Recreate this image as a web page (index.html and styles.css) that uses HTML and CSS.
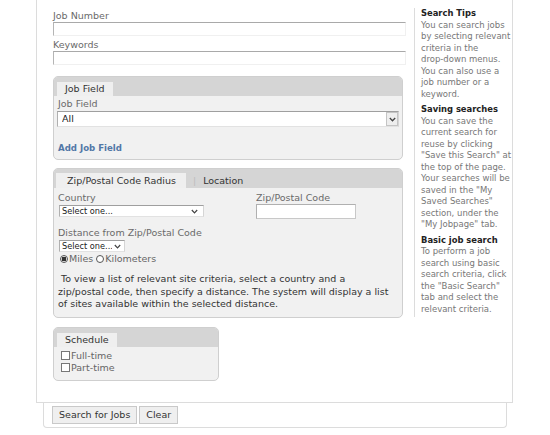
FILE: index.html
```html
<!DOCTYPE html>
<html>
<head>
<meta charset="utf-8">
<link rel="stylesheet" href="styles.css">
</head>
<body>
<div class="page">
  <div class="card">
    <form class="main">
      <label class="lbl">Job Number</label>
      <input type="text" class="field">
      <label class="lbl">Keywords</label>
      <input type="text" class="field">

      <section class="panel panel-jobfield">
        <div class="panel-head"><span class="tab">Job Field</span></div>
        <div class="panel-body">
          <label class="lbl">Job Field</label>
          <div class="select select-big">
            <span class="select-val">All</span>
            <span class="select-btn"><svg width="7" height="5" viewBox="0 0 7 5"><polyline points="0.8,1 3.5,3.8 6.2,1" fill="none" stroke="#444" stroke-width="1.3"/></svg></span>
          </div>
          <a class="add-link">Add Job Field</a>
        </div>
      </section>

      <section class="panel panel-loc">
        <div class="panel-head">
          <span class="tab">Zip/Postal Code Radius</span>
          <span class="sep">|</span>
          <span class="tab-plain">Location</span>
        </div>
        <div class="panel-body">
          <div class="loc-grid">
            <div>
              <label class="lbl">Country</label>
              <div class="select select-sm select-country">
                <span class="select-val">Select one...</span>
                <svg width="7" height="5" viewBox="0 0 7 5"><polyline points="0.8,1 3.5,3.8 6.2,1" fill="none" stroke="#444" stroke-width="1.2"/></svg>
              </div>
            </div>
            <div>
              <label class="lbl">Zip/Postal Code</label>
              <input type="text" class="field field-zip">
            </div>
          </div>
          <label class="lbl lbl-dist">Distance from Zip/Postal Code</label>
          <div class="select select-sm select-dist">
            <span class="select-val">Select one...</span>
            <svg width="7" height="5" viewBox="0 0 7 5"><polyline points="0.8,1 3.5,3.8 6.2,1" fill="none" stroke="#444" stroke-width="1.2"/></svg>
          </div>
          <div class="radios">
            <label class="opt"><input type="radio" name="unit" class="rb" checked>Miles</label>
            <label class="opt"><input type="radio" name="unit" class="rb">Kilometers</label>
          </div>
          <p class="note">To view a list of relevant site criteria, select a country and a<br>zip/postal code, then specify a distance. The system will display a list<br>of sites available within the selected distance.</p>
        </div>
      </section>

      <section class="panel panel-sched">
        <div class="panel-head"><span class="tab">Schedule</span></div>
        <div class="panel-body">
          <label class="opt opt-line"><input type="checkbox" class="cb">Full-time</label>
          <label class="opt opt-line"><input type="checkbox" class="cb">Part-time</label>
        </div>
      </section>
    </form>

    <aside class="tips">
      <div class="tip">
        <h3 class="tip-title">Search Tips</h3>
        <p>You can search jobs<br>by selecting relevant<br>criteria in the<br>drop-down menus.<br>You can also use a<br>job number or a<br>keyword.</p>
      </div>
      <div class="tip">
        <h3 class="tip-title">Saving searches</h3>
        <p>You can save the<br>current search for<br>reuse by clicking<br>"Save this Search" at<br>the top of the page.<br>Your searches will be<br>saved in the "My<br>Saved Searches"<br>section, under the<br>"My Jobpage" tab.</p>
      </div>
      <div class="tip">
        <h3 class="tip-title">Basic job search</h3>
        <p>To perform a job<br>search using basic<br>search criteria, click<br>the "Basic Search"<br>tab and select the<br>relevant criteria.</p>
      </div>
    </aside>
  </div>
  <div class="actions">
    <button type="button" class="btn">Search for Jobs</button>
    <button type="button" class="btn">Clear</button>
  </div>
</div>
</body>
</html>
```

FILE: styles.css
```css
* { box-sizing: border-box; }

body {
  margin: 0;
  background: #fff;
  font-family: "DejaVu Sans", Verdana, sans-serif;
  font-size: 9.5px;
  line-height: 12px;
  color: #6a6a6a;
}

.page {
  margin-left: 36px;
  width: 477px;
}

.card {
  display: flex;
  align-items: flex-start;
  border: 1px solid #dcdcdc;
  border-top: none;
}

.main {
  width: 377px;
  margin: 0;
  padding: 10px 8px 21px 16px;
}

.lbl {
  display: block;
  line-height: 12px;
  color: #6a6a6a;
}

.field {
  display: block;
  width: 353px;
  height: 14px;
  margin: 0 0 3px;
  padding: 0;
  background: #fff;
  border: 1px solid;
  border-color: #a9a9a9 #f0f0f0 #f0f0f0 #b5b5b5;
  font: inherit;
}

/* panels */
.panel {
  border: 1px solid #cfcfcf;
  border-radius: 5px;
  background: #f1f1f1;
  overflow: hidden;
}

.panel-head {
  display: flex;
  align-items: flex-end;
  height: 19px;
  padding-left: 3px;
  background: #d5d5d5;
  color: #333;
}

.tab {
  height: 14px;
  line-height: 14px;
  padding: 0 8px;
  background: #efefef;
  color: #333;
}

.panel-body {
  padding: 2px 4px 5px 4px;
}

.panel-jobfield {
  width: 350px;
  margin-top: 11px;
}

.select {
  display: flex;
  align-items: center;
  justify-content: space-between;
  background: #fff;
  border: 1px solid;
  border-color: #9f9f9f #d5d5d5 #e2e2e2 #b0b0b0;
  color: #222;
  white-space: nowrap;
}

.select-val {
  overflow: hidden;
}

.select svg { flex: none; }

.select-big {
  width: 342px;
  height: 16px;
  margin-top: 1px;
  margin-left: -1px;
  padding-left: 4px;
}

.select-btn {
  display: flex;
  align-items: center;
  justify-content: center;
  width: 12px;
  height: 14px;
  border: 1px solid #c4c4c4;
  background: #eeeeee;
}

.add-link {
  display: block;
  margin-top: 15px;
  font-size: 8.6px;
  font-weight: bold;
  color: #5277a6;
  cursor: pointer;
}

/* location panel */
.panel-loc {
  width: 350px;
  margin-top: 8px;
}

.panel-loc .panel-head {
  padding-left: 2px;
}

.panel-loc .tab {
  height: 15px;
  line-height: 15px;
  padding: 0 10px 0 11px;
}

.sep {
  height: 15px;
  line-height: 15px;
  margin: 0 7px;
  color: #bdbdbd;
}

.tab-plain {
  height: 15px;
  line-height: 15px;
  color: #333;
}

.panel-loc .panel-body {
  padding: 4px 4px 6px 4px;
}

.loc-grid {
  display: grid;
  grid-template-columns: 198px 1fr;
  align-items: start;
}

.select-sm {
  height: 12px;
  margin-top: 1px;
  margin-left: 1px;
  padding: 0 5px 0 2px;
  font-size: 8.2px;
  line-height: 10px;
  color: #222;
}

.select-country { width: 145px; }

.select-dist {
  width: 66px;
  padding-right: 3px;
  gap: 2px;
}

.field-zip {
  width: 100px;
  height: 15px;
  margin: 0;
  border-color: #b0b0b0 #c8c8c8 #c8c8c8 #b0b0b0;
}

.lbl-dist { margin-top: 8px; }

.radios {
  display: flex;
  margin-top: 1px;
  padding-left: 2px;
}

.opt {
  display: flex;
  align-items: center;
  line-height: 12px;
  color: #666;
}

.rb {
  appearance: none;
  width: 8px;
  height: 8px;
  margin: 0 1px 0 0;
  border: 1px solid #555;
  border-radius: 50%;
  background: #fff;
}

.rb:checked {
  background: radial-gradient(circle, #333 0 2.2px, #fff 2.6px);
}

.opt + .opt .rb { margin-left: 3px; }

.note {
  margin: 8px 0 0;
  line-height: 12.5px;
  text-indent: 3px;
  color: #333;
}

/* schedule */
.panel-sched {
  width: 166px;
  margin-top: 9px;
}

.panel-sched .panel-body {
  padding: 3px 4px 6px 4px;
}

.cb {
  appearance: none;
  width: 9px;
  height: 9px;
  margin: 0 1px 0 3px;
  border: 1px solid #777;
  background: #fff;
}

/* tips sidebar */
.tips {
  flex: 1;
  margin-top: 8px;
  padding: 0 0 2px 6px;
  border-left: 1px solid #dcdcdc;
  font-size: 8.5px;
  line-height: 11.5px;
  color: #777;
  white-space: nowrap;
}

.tip + .tip { margin-top: 4px; }

.tip-title {
  margin: 0;
  font-size: 8.4px;
  font-weight: bold;
  color: #222;
}

.tip p { margin: 0; }

/* actions */
.actions {
  display: flex;
  gap: 2px;
  height: 25px;
  margin: 0 6px 0 7px;
  padding: 3px 8px 0;
  border: 1px solid #dcdcdc;
  border-top: none;
  border-radius: 0 0 4px 4px;
}

.btn {
  height: 18px;
  padding: 0 6px;
  font: inherit;
  line-height: 16px;
  color: #333;
  background: #efefef;
  border: 1px solid #c9c9c9;
  border-radius: 0;
}
```
